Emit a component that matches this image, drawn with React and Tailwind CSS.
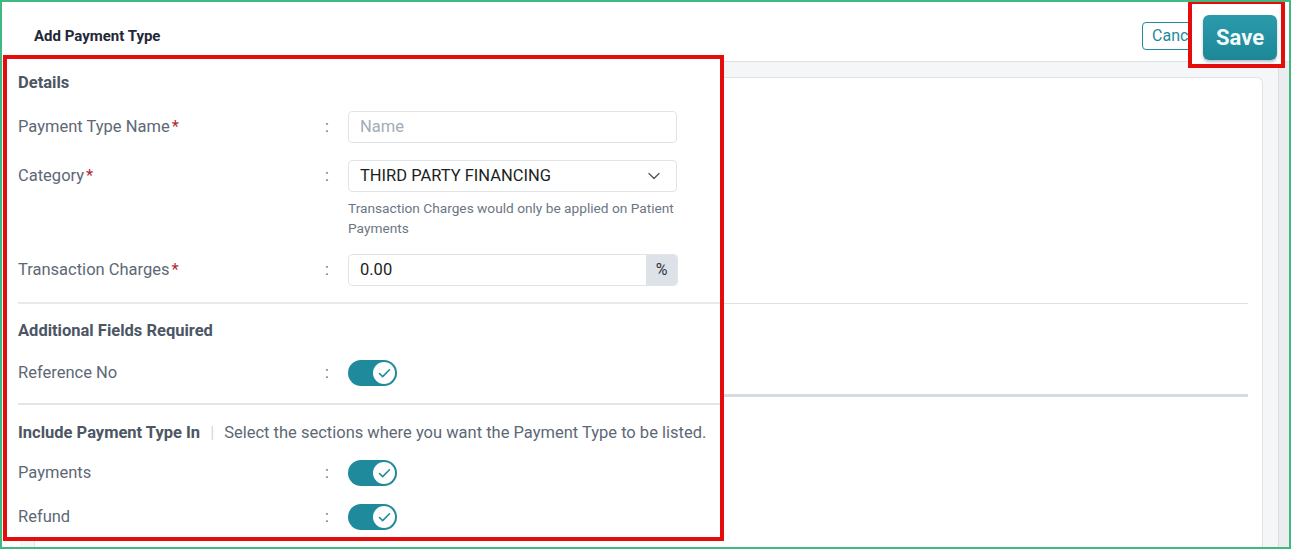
import { ChevronDown, Check } from "lucide-react";

function Toggle() {
  return (
    <div className="flex h-[26px] w-[49px] items-center justify-end rounded-full bg-[#1f8a9b] pr-[2px]">
      <div className="flex h-[22px] w-[22px] items-center justify-center rounded-full bg-white">
        <Check size={15} strokeWidth={2.5} className="text-[#1f8a9b]" />
      </div>
    </div>
  );
}

function Row({ label, required, className = "", children }) {
  return (
    <div className={"flex items-center " + className}>
      <div className="w-[307px] text-[16.5px] text-[#5d6876]">
        {label}
        {required && <span className="ml-[2px] text-[#b0282f]">*</span>}
      </div>
      <div className="w-[10px] text-[16px] text-[#6b7280]">:</div>
      <div className="ml-[13px]">{children}</div>
    </div>
  );
}

export default function App() {
  return (
    <div className="relative flex h-[549px] w-[1291px] flex-col overflow-hidden border-2 border-[#41b87f] bg-white font-['Roboto','Liberation_Sans',sans-serif]">
      {/* header */}
      <div className="flex h-[60px] shrink-0 items-start justify-between border-b border-[#dde1e6] pl-[32px] pr-[12px] pt-[20px]">
        <h1 className="mt-[4px] text-[15px] font-bold leading-[20px] text-[#1f2937]">
          Add Payment Type
        </h1>
        <div className="flex items-start gap-[8px]">
          <button className="h-[28px] rounded-[4px] border border-[#1f8a9b] px-[9px] text-[16px] text-[#1f8a9b]">
            Cancel
          </button>
          <button className="h-[28px] rounded-[4px] bg-[#1f8a9b] px-[12px] text-[16px] text-white">
            Save
          </button>
        </div>
      </div>

      {/* body */}
      <div className="flex flex-1">
        <div className="w-[18px] bg-white" />
        <div className="flex-1 bg-[#f4f6f8] pl-[14px] pr-[15px] pt-[15px]">
          <div className="h-full rounded-t-[6px] border border-b-0 border-[#dfe3e8] bg-white px-[14px]">
            <div className="h-[225px]" />
            <div className="border-t border-[#dcdfe4]" />
            <div className="h-[90px]" />
            <div className="border-t-[3px] border-[#d6dbe1]" />
          </div>
        </div>
        <div className="w-[11px] border-l border-[#d8dde3] bg-[#eaedf0]" />
      </div>

      {/* highlighted form */}
      <div className="absolute left-[1px] top-[53px] h-[486px] w-[721px] border-[4px] border-[#e50c0c] bg-white pt-[12px]">
        <div className="pl-[11px]">
          <h2 className="text-[16.5px] font-bold leading-[24px] text-[#4c5664]">Details</h2>

          <Row label="Payment Type Name" required className="mt-[16px]">
            <div className="flex h-[32px] w-[329px] items-center rounded-[4px] border border-[#e0e4e9] pl-[11px] text-[16.5px] text-[#a3acb7]">
              Name
            </div>
          </Row>

          <Row label="Category" required className="mt-[17px]">
            <div className="flex h-[32px] w-[329px] items-center justify-between rounded-[4px] border border-[#e0e4e9] pl-[11px] pr-[12px] text-[16.5px] text-[#1b1f24]">
              THIRD PARTY FINANCING
              <ChevronDown size={20} strokeWidth={1.5} className="text-[#4b5563]" />
            </div>
          </Row>

          <div className="ml-[330px] mt-[6px] w-[335px] text-[13.7px] leading-[20px] text-[#6b7684]">
            Transaction Charges would only be applied on Patient Payments
          </div>

          <Row label="Transaction Charges" required className="mt-[16px]">
            <div className="flex h-[32px] w-[330px] overflow-hidden rounded-[4px] border border-[#e0e4e9] text-[16.5px]">
              <div className="flex flex-1 items-center pl-[11px] text-[#1b1f24]">0.00</div>
              <div className="flex w-[31px] items-center justify-center bg-[#dde2e8] text-[16px] text-[#2d3540]">
                %
              </div>
            </div>
          </Row>
        </div>

        <div className="ml-[11px] mt-[16px] border-t-2 border-[#e7e9ed]" />

        <div className="pl-[11px]">
          <h2 className="mt-[15px] text-[16.5px] font-bold leading-[24px] text-[#4c5664]">
            Additional Fields Required
          </h2>
          <Row label="Reference No" className="mt-[17px]">
            <Toggle />
          </Row>
        </div>

        <div className="ml-[11px] mt-[17px] border-t-2 border-[#e2e5e9]" />

        <div className="pl-[11px]">
          <div className="mt-[16px] flex items-center text-[16.5px] leading-[24px]">
            <span className="font-bold text-[#4c5664]">Include Payment Type In</span>
            <span className="mx-[10px] text-[#d3d7dc]">|</span>
            <span className="text-[#5d6876]">
              Select the sections where you want the Payment Type to be listed.
            </span>
          </div>
          <Row label="Payments" className="mt-[15px]">
            <Toggle />
          </Row>
          <Row label="Refund" className="mt-[18px]">
            <Toggle />
          </Row>
        </div>
      </div>

      {/* highlighted save */}
      <div className="absolute left-[1186px] top-[-2px] h-[68px] w-[97px] border-[4px] border-[#e50c0c] bg-white pl-[11px] pt-[11px]">
        <button className="h-[45px] w-[74px] rounded-[6px] bg-gradient-to-b from-[#2b9bac] to-[#1d8797] text-[22px] font-bold text-[#f2fafb] shadow-[0_2px_3px_rgba(0,0,0,0.25)]">
          Save
        </button>
      </div>
    </div>
  );
}
